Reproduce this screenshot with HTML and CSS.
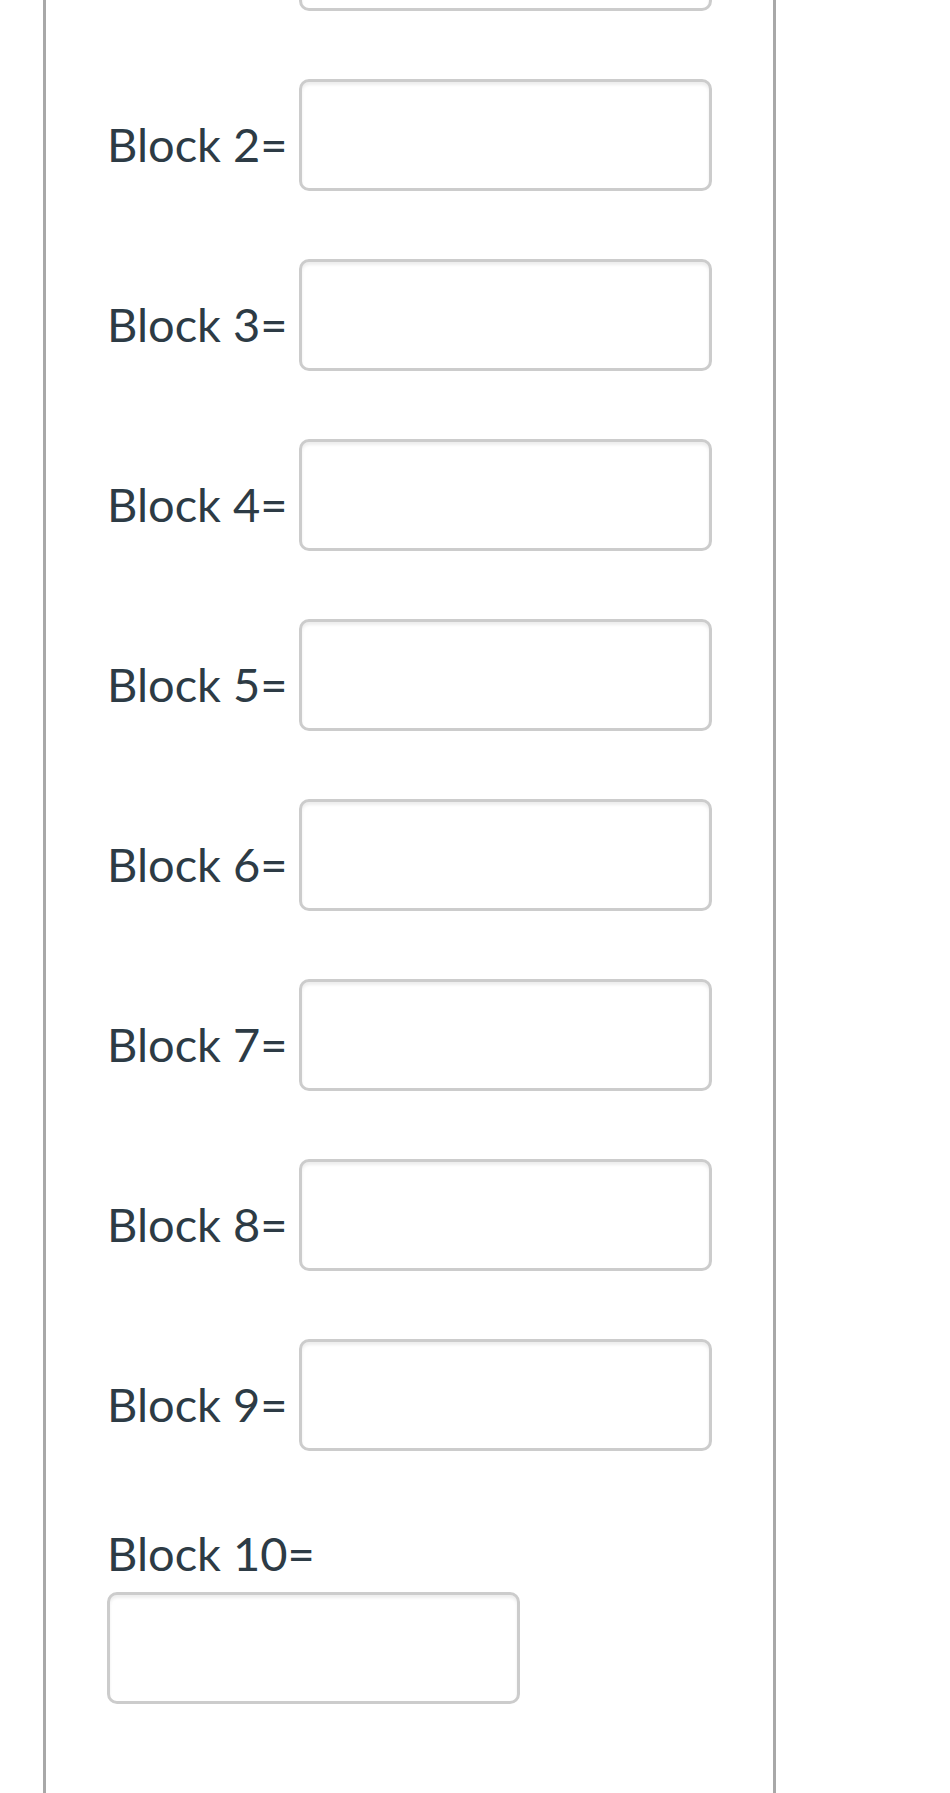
FILE: index.html
```html
<!DOCTYPE html>
<html>
<head>
<meta charset="utf-8">
<link rel="stylesheet" href="styles.css">
</head>
<body>
<div class="panel">
  <div class="row"><span class="label">Block 1=</span><input class="blank" type="text"></div>
  <div class="row"><span class="label">Block 2=</span><input class="blank" type="text"></div>
  <div class="row"><span class="label">Block 3=</span><input class="blank" type="text"></div>
  <div class="row"><span class="label">Block 4=</span><input class="blank" type="text"></div>
  <div class="row"><span class="label">Block 5=</span><input class="blank" type="text"></div>
  <div class="row"><span class="label">Block 6=</span><input class="blank" type="text"></div>
  <div class="row"><span class="label">Block 7=</span><input class="blank" type="text"></div>
  <div class="row"><span class="label">Block 8=</span><input class="blank" type="text"></div>
  <div class="row"><span class="label">Block 9=</span><input class="blank" type="text"></div>
  <div class="row stacked"><span class="label">Block 10=</span><input class="blank" type="text"></div>
</div>
</body>
</html>
```

FILE: styles.css
```css
html, body {
  margin: 0;
  padding: 0;
  background: #ffffff;
}
body {
  font-family: Lato, "Open Sans", sans-serif;
  color: #2d3b45;
  height: 1793px;
  overflow: hidden;
}
.panel {
  margin: -101px 0 0 43px;
  width: 733px;
  box-sizing: border-box;
  border-left: 3px solid #a8a8a8;
  border-right: 3px solid #a8a8a8;
  padding: 0 61px 200px 61px;
  min-height: 2000px;
  display: flex;
  flex-direction: column;
  gap: 68px;
}
.row {
  display: flex;
  align-items: flex-start;
  gap: 11px;
}
.label {
  font-size: 47px;
  line-height: 48px;
  margin-top: 41px;
  white-space: nowrap;
}
.blank {
  box-sizing: border-box;
  width: 413px;
  height: 112px;
  border: 3px solid #cccccc;
  border-radius: 10px;
  box-shadow: inset 0 3px 3px rgba(0, 0, 0, 0.07);
  background: #ffffff;
  margin: 0;
  padding: 0 12px;
  font: inherit;
  outline: none;
}
.row.stacked {
  flex-direction: column;
  gap: 15px;
}
.row.stacked .label {
  margin-top: 10px;
}
```
